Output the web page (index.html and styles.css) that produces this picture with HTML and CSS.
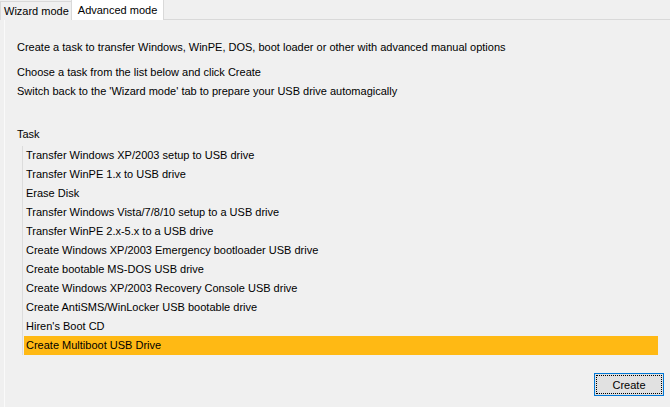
FILE: index.html
```html
<!DOCTYPE html>
<html lang="en">
<head>
    <meta charset="UTF-8">
    <title>Advanced mode</title>
    <link rel="stylesheet" href="styles.css">
</head>
<body>
    <div class="tabs">
        <div class="tab">Wizard mode</div>
        <div class="tab active">Advanced mode</div>
    </div>

    <div class="panel">
        <p class="intro">Create a task to transfer Windows, WinPE, DOS, boot loader or other with advanced manual options</p>
        <p class="hint">Choose a task from the list below and click Create</p>
        <p class="hint">Switch back to the 'Wizard mode' tab to prepare your USB drive automagically</p>

        <div class="task-label">Task</div>
        <ul class="task-list">
            <li>Transfer Windows XP/2003 setup to USB drive</li>
            <li>Transfer WinPE 1.x to USB drive</li>
            <li>Erase Disk</li>
            <li>Transfer Windows Vista/7/8/10 setup to a USB drive</li>
            <li>Transfer WinPE 2.x-5.x to a USB drive</li>
            <li>Create Windows XP/2003 Emergency bootloader USB drive</li>
            <li>Create bootable MS-DOS USB drive</li>
            <li>Create Windows XP/2003 Recovery Console USB drive</li>
            <li>Create AntiSMS/WinLocker USB bootable drive</li>
            <li>Hiren's Boot CD</li>
            <li class="selected">Create Multiboot USB Drive</li>
        </ul>

        <div class="actions">
            <button class="btn">Create</button>
        </div>
    </div>
</body>
</html>
```

FILE: styles.css
```css
body {
    margin: 0;
    width: 670px;
    height: 407px;
    overflow: hidden;
    background: #f0f0f0;
    font-family: "Liberation Sans", Arial, sans-serif;
    font-size: 11px;
    color: #000;
}
.tabs {
    display: flex;
    height: 19px;
    border-bottom: 1px solid #d9d9d9;
    background: #f0f0f0;
}
.tab {
    height: 18px;
    margin-top: 1px;
    padding: 0 2px 0 3px;
    line-height: 18px;
    border: 1px solid #d9d9d9;
    border-bottom: none;
    border-right: none;
    background: #f0f0f0;
}
.tab.active {
    height: 20px;
    margin-top: -1px;
    margin-bottom: -1px;
    padding: 0 6px 0 6px;
    line-height: 20px;
    background: #fff;
    border-right: 1px solid #d9d9d9;
}
.panel {
    height: 387px;
    margin-left: 4px;
    border-left: 1px solid #fafafa;
    padding-left: 12px;
}
.intro {
    margin: 0;
    padding-top: 19px;
    line-height: 16px;
}
.hint {
    margin: 0;
    line-height: 19px;
}
.intro + .hint {
    margin-top: 8px;
}
.task-label {
    margin-top: 25px;
    line-height: 16px;
}
.task-list {
    list-style: none;
    margin: 4px 0 0 5px;
    padding: 0;
    width: 635px;
    border-left: 1px solid #dcdcdc;
}
.task-list li {
    height: 19px;
    line-height: 19px;
    padding-left: 3px;
}
.task-list li.selected {
    background: #ffb914;
    margin-left: 1px;
    padding-left: 2px;
}
.actions {
    display: flex;
    justify-content: flex-end;
    padding: 18px 6px 0 0;
}
.btn {
    width: 70px;
    height: 23px;
    font-family: inherit;
    font-size: 11px;
    background: #e1e1e1;
    border: 1px solid #0078d7;
    outline: 1px dotted #000;
    outline-offset: -3px;
    padding: 0;
}
```
